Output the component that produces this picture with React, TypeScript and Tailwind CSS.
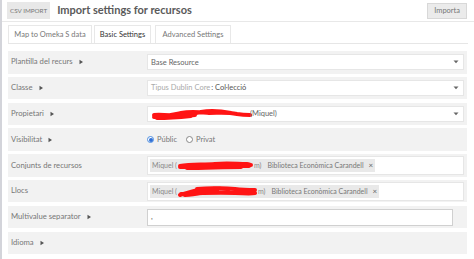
import React from "react";

const Caret = () => (
  <svg width="5" height="6" viewBox="0 0 5 6" className="ml-[6px] inline-block">
    <path d="M0.5 0.8 L4 3 L0.5 5.2 Z" fill="#555" />
  </svg>
);

const DownCaret = () => (
  <svg width="6" height="4" viewBox="0 0 6 4" className="mr-[4px]">
    <path d="M0.5 0.5 L5.5 0.5 L3 3.3 Z" fill="#666" />
  </svg>
);

const Scribble = ({ w, h, d }: { w: number; h: number; d: string }) => (
  <svg width={w} height={h} viewBox={`0 0 ${w} ${h}`} className="shrink-0">
    <path d={d} stroke="#ff1414" strokeWidth="4" fill="none" strokeLinecap="round" strokeLinejoin="round" />
  </svg>
);

const Row = ({
  label,
  caret = true,
  children,
}: {
  label: string;
  caret?: boolean;
  children?: React.ReactNode;
}) => (
  <div className="flex h-[22.5px] items-center bg-[#f2f2f2]">
    <div className="flex w-[139px] shrink-0 items-center pl-[3px] text-[7.7px] text-[#777]">
      {label}
      {caret && <Caret />}
    </div>
    <div className="flex flex-1 items-center">{children}</div>
  </div>
);

const Select = ({ children }: { children: React.ReactNode }) => (
  <div className="mr-[3px] flex h-[16px] flex-1 items-center justify-between border border-[#e6e6e6] bg-white pl-[3px] text-[7.5px] text-[#666]">
    <div className="flex items-center">{children}</div>
    <DownCaret />
  </div>
);

const Chip = ({ scribble }: { scribble: React.ReactNode }) => (
  <div className="mr-[3px] flex h-[19px] flex-1 items-center border border-[#e6e6e6] bg-white pl-[2px] text-[7px] text-[#888]">
    <div className="flex h-[13px] items-center bg-[#e9e9e9] px-[2px]">
      <span>Miquel (</span>
      {scribble}
      <span className="ml-[1px]">m)</span>
      <span className="ml-[6px] text-[#777]">Biblioteca Econòmica Carandell</span>
      <span className="ml-[5px] text-[8px] text-[#666]">×</span>
    </div>
  </div>
);

export default function App() {
  return (
    <div className="flex min-h-[259px] w-[474px] bg-white font-['Lato','Open_Sans',sans-serif]">
      <div className="w-[2px] shrink-0 bg-[#d3d4da]" />
      <div className="flex-1">
        <div className="flex h-[22px] items-center justify-between border-b border-[#e8e8e8] pl-[5px] pr-[7px]">
          <div className="flex items-center">
            <div className="flex h-[17px] items-center bg-[#e8e8e8] px-[3px] text-[6.3px] text-[#777]">
              CSV IMPORT
            </div>
            <div className="ml-[7px] text-[11px] font-bold text-[#5a5a5a]">
              Import settings for recursos
            </div>
          </div>
          <div className="flex h-[16px] items-center border border-[#d8d8d8] bg-[#ebebeb] px-[6px] text-[7.5px] text-[#777]">
            Importa
          </div>
        </div>

        <div className="mx-[6px] mt-[3px] flex h-[19px] items-stretch border-b border-[#e6e6e6] text-[7.5px] text-[#777]">
          <div className="flex w-[84px] items-center justify-center border border-b-0 border-[#e8e8e8]">
            Map to Omeka S data
          </div>
          <div className="ml-[2px] flex w-[57px] items-center justify-center border border-b-0 border-[#e8e8e8] text-[#333]">
            Basic Settings
          </div>
          <div className="ml-[4px] flex w-[76px] items-center justify-center border border-b-0 border-[#e8e8e8]">
            Advanced Settings
          </div>
        </div>

        <div className="ml-[6px] mr-[7px] mt-[7px] flex flex-col gap-[3.3px]">
          <Row label="Plantilla del recurs">
            <Select>Base Resource</Select>
          </Row>
          <Row label="Classe">
            <Select>
              <span className="text-[#aaa]">Tipus Dublin Core</span>
              <span className="ml-[1px] text-[#555]">: Col·lecció</span>
            </Select>
          </Row>
          <Row label="Propietari">
            <Select>
              <Scribble
                w={101}
                h={13}
                d="M3 10 C12 10 20 8 30 6 C40 4 48 5 58 6 C68 6 76 5 86 7 C92 8 96 8 99 8 M4 10 C20 8 36 8 50 5 C60 3 70 4 80 6 M3 8 C14 7 28 10 44 8 M6 11 C20 11 30 10 40 9"
              />
              <span className="-ml-[2px]">(Miquel)</span>
            </Select>
          </Row>
          <Row label="Visibilitat">
            <div className="flex items-center text-[7.5px] text-[#777]">
              <span className="flex h-[7px] w-[7px] items-center justify-center rounded-full border border-[#4d8ee0] bg-white">
                <span className="h-[4px] w-[4px] rounded-full bg-[#2f6fd6]" />
              </span>
              <span className="ml-[3px]">Públic</span>
              <span className="ml-[9px] h-[7px] w-[7px] rounded-full border border-[#888] bg-white" />
              <span className="ml-[3px]">Privat</span>
            </div>
          </Row>
          <Row label="Conjunts de recursos" caret={false}>
            <Chip
              scribble={
                <Scribble
                  w={76}
                  h={11}
                  d="M3 6 C14 4 26 5 38 4 C50 3 60 4 70 4 C72 4 73 5 74 5 M3 7 C20 7 36 7 54 6 C62 6 68 6 72 6 M10 8 C28 8 46 7 64 7"
                />
              }
            />
          </Row>
          <Row label="Llocs" caret={false}>
            <Chip
              scribble={
                <Scribble
                  w={80}
                  h={13}
                  d="M3 10 C10 8 18 5 28 4 C38 3 48 3 58 4 C66 5 72 5 78 5 M4 9 C22 8 40 7 58 8 C66 8 72 9 78 8 M20 4 C32 3 42 3 52 4 M8 10 C20 9 30 7 40 6"
                />
              }
            />
          </Row>
          <Row label="Multivalue separator">
            <div className="mr-[14px] flex h-[17px] flex-1 items-center border border-[#d0d0d0] bg-white pl-[3px] text-[7.5px] text-[#555]">
              ,
            </div>
          </Row>
          <Row label="Idioma" />
        </div>
      </div>
    </div>
  );
}
